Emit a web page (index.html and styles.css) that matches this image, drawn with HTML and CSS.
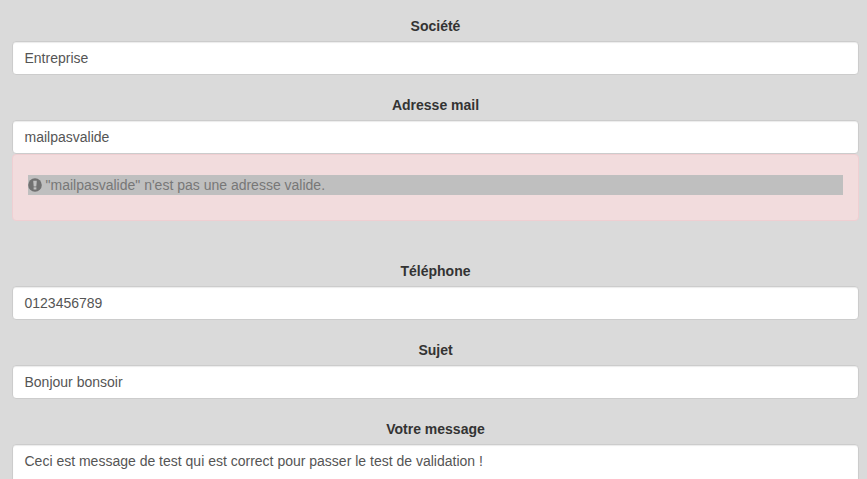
FILE: index.html
```html
<!DOCTYPE html>
<html lang="fr">
<head>
  <meta charset="UTF-8" />
  <title>Contact</title>
  <link rel="stylesheet" href="styles.css">
</head>
<body>
  <form class="contact-form">
    <div class="form-group">
      <label>Société</label>
      <div class="form-control">Entreprise</div>
    </div>

    <div class="form-group has-error">
      <label>Adresse mail</label>
      <div class="form-control">mailpasvalide</div>
      <div class="alert">
        <div class="alert-line">
          <svg class="icon" viewBox="0 0 14 14" aria-hidden="true">
            <circle cx="7" cy="7" r="6.8" fill="#717171"/>
            <path d="M5.2 2.8h3.6l-.5 5.6H5.7z" fill="#bfbfbf"/>
            <rect x="5.6" y="9.3" width="2.8" height="2.2" fill="#bfbfbf"/>
          </svg>
          <span>"mailpasvalide" n'est pas une adresse valide.</span>
        </div>
      </div>
    </div>

    <div class="form-group">
      <label>Téléphone</label>
      <div class="form-control">0123456789</div>
    </div>

    <div class="form-group">
      <label>Sujet</label>
      <div class="form-control">Bonjour bonsoir</div>
    </div>

    <div class="form-group">
      <label>Votre message</label>
      <div class="form-control textarea">Ceci est message de test qui est correct pour passer le test de validation !</div>
    </div>
  </form>
</body>
</html>
```

FILE: styles.css
```css
html, body {
  height: 100%;
  overflow: hidden;
}
body {
  margin: 0;
  background: #dadada;
  font-family: "Liberation Sans", Arial, sans-serif;
  font-size: 14px;
  line-height: 20px;
  color: #333;
}
.contact-form {
  height: 100%;
  overflow: hidden;
  padding: 16px 8.5px 0 11.5px;
  box-sizing: border-box;
}
.form-group {
  margin-bottom: 20px;
}
.form-group label {
  display: block;
  margin-bottom: 5px;
  padding-left: 1px;
  font-weight: bold;
  text-align: center;
}
.form-control {
  box-sizing: border-box;
  height: 34px;
  padding: 6px 12px;
  background: #fff;
  border: 1px solid #ccc;
  border-radius: 4px;
  box-shadow: inset 0 1px 1px rgba(0, 0, 0, 0.08);
  color: #555;
}
.textarea {
  height: 120px;
}
.alert {
  box-sizing: border-box;
  height: 67px;
  margin-bottom: 40px;
  padding: 20px 15px 0;
  background: #f2dcdd;
  border: 1px solid #efcfd2;
  border-radius: 4px;
}
.alert-line {
  display: flex;
  align-items: center;
  gap: 4px;
  height: 20px;
  background: #bfbfbf;
  color: #777;
  white-space: nowrap;
}
.icon {
  width: 14px;
  height: 14px;
  flex: none;
}
```
